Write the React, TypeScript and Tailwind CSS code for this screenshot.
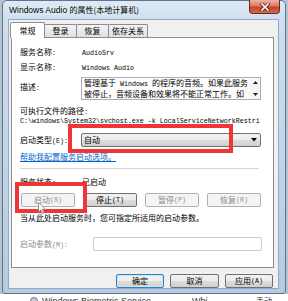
import React from "react";

const CJK = /[\u3000-\u9fff\uff00-\uffef]/;

// SimSun-like metrics: CJK 8px wide, ASCII 4px wide
function T({ s }: { s: string }) {
  const runs: { cjk: boolean; text: string }[] = [];
  for (const ch of s) {
    const c = CJK.test(ch);
    const last = runs[runs.length - 1];
    if (last && last.cjk === c) last.text += ch;
    else runs.push({ cjk: c, text: ch });
  }
  return (
    <>
      {runs.map((r, i) =>
        r.cjk ? (
          <span key={i} className="font-['Noto_Sans_CJK_SC',sans-serif] text-[8px]">
            {r.text}
          </span>
        ) : (
          <span key={i} className="whitespace-pre font-['Liberation_Mono',monospace] text-[6.67px]">
            {r.text}
          </span>
        )
      )}
    </>
  );
}

type BtnProps = { label: string; w: number; disabled?: boolean; primary?: boolean };

function Btn({ label, w, disabled, primary }: BtnProps) {
  const base = "flex h-[14px] items-center justify-center rounded-[2px] border leading-[10px]";
  const look = disabled
    ? "border-[#adb2b5] bg-[#f4f4f4] text-[#8d8d8d]"
    : primary
      ? "border-[#3c7fb1] bg-[linear-gradient(180deg,#f6f6f6_0%,#ececec_50%,#dfdfdf_50%,#d3d3d3_100%)] text-black shadow-[inset_0_0_0_1px_#c6e4f7]"
      : "border-[#707070] bg-[linear-gradient(180deg,#f2f2f2_0%,#ebebeb_50%,#dddddd_50%,#cfcfcf_100%)] text-black";
  return (
    <div className={`${base} ${look}`} style={{ width: w }}>
      <T s={label} />
    </div>
  );
}

function Row({ label, value }: { label: string; value: string }) {
  return (
    <div className="flex h-[10px] items-center leading-[10px]">
      <div className="w-[62px] shrink-0">
        <T s={label} />
      </div>
      <div>
        <T s={value} />
      </div>
    </div>
  );
}

export default function App() {
  return (
    <div className="relative h-[301px] w-[288px] overflow-hidden bg-[#b9c3cd] font-['Noto_Sans_CJK_SC',sans-serif] text-[8px] leading-[10px] text-black">
      {/* window */}
      <div className="ml-[2px] flex h-[294px] w-[284px] flex-col rounded-t-[5px] rounded-b-[3px] border border-[#5f7490] bg-[linear-gradient(180deg,#dfeaf5_0%,#cfdfef_18px,#c0d3e7_60%,#b6cbe2_100%)] px-[5px] pb-[4px]">
        {/* title bar */}
        <div className="flex h-[18px] shrink-0 items-start justify-between">
          <div className="flex h-[17px] items-center pl-[1px] leading-[10px] [text-shadow:0_0_5px_#ffffff]">
            <span className="whitespace-pre font-['Liberation_Sans',sans-serif] text-[8.5px]">Windows Audio </span>
            <span className="font-['Noto_Sans_CJK_SC',sans-serif] text-[8px]">的属性(本地计算机)</span>
          </div>
          <div className="-mt-[1px] flex h-[14px] w-[31px] items-center justify-center rounded-b-[4px] border border-t-0 border-[#6e2a1c] bg-[linear-gradient(180deg,#eab2a4_0%,#dc7a62_45%,#c8432b_55%,#d4694f_100%)]">
            <svg width="10" height="8" viewBox="0 0 10 8">
              <path d="M2 1 L8 7 M8 1 L2 7" stroke="#5a2016" strokeWidth="3.2" strokeLinecap="square" />
              <path d="M2 1 L8 7 M8 1 L2 7" stroke="#ffffff" strokeWidth="1.7" strokeLinecap="square" />
            </svg>
          </div>
        </div>

        {/* client area */}
        <div className="flex h-[270px] w-[271px] flex-col border border-[#98a9be] bg-[#f0f0f0] pt-[2px]">
          {/* tabs */}
          <div className="flex h-[15px] items-end pl-[1px]">
            <div className="relative z-10 -mb-[1px] flex h-[16px] w-[35px] items-center justify-center rounded-t-[2px] border border-b-0 border-[#898c95] bg-white leading-[10px]">
              <T s="常规" />
            </div>
            <div className="-ml-[1px] flex h-[13px] w-[33px] items-center justify-center rounded-t-[2px] border border-b-0 border-[#898c95] bg-[linear-gradient(180deg,#f4f4f4,#e0e0e0)] leading-[10px]">
              <T s="登录" />
            </div>
            <div className="-ml-[1px] flex h-[13px] w-[33px] items-center justify-center rounded-t-[2px] border border-b-0 border-[#898c95] bg-[linear-gradient(180deg,#f4f4f4,#e0e0e0)] leading-[10px]">
              <T s="恢复" />
            </div>
            <div className="-ml-[1px] flex h-[13px] w-[40px] items-center justify-center rounded-t-[2px] border border-b-0 border-[#898c95] bg-[linear-gradient(180deg,#f4f4f4,#e0e0e0)] leading-[10px]">
              <T s="依存关系" />
            </div>
          </div>

          {/* panel */}
          <div className="ml-[2px] flex h-[231px] w-[263px] flex-col border border-[#898c95] bg-white pl-[8px]">
            <div className="mt-[9px]">
              <Row label="服务名称:" value="AudioSrv" />
            </div>
            <div className="mt-[5px]">
              <Row label="显示名称:" value="Windows Audio" />
            </div>

            <div className="mt-[5px] flex">
              <div className="mt-[5px] h-[10px] w-[61px] shrink-0 leading-[10px]">
                <T s="描述:" />
              </div>
              <div className="flex h-[23px] w-[180px] border border-[#abadb3] bg-[#fcfcfc]">
                <div className="flex-1 overflow-hidden pl-[2px] pt-[0px] leading-[9px]">
                  <div className="whitespace-nowrap">
                    <T s="管理基于 Windows 的程序的音频。如果此服务" />
                  </div>
                  <div className="whitespace-nowrap">
                    <T s="被停止，音频设备和效果将不能正常工作。如" />
                  </div>
                </div>
                <div className="flex w-[10px] flex-col items-center justify-between bg-[#f6f6f6] py-[3px]">
                  <svg width="5" height="3" viewBox="0 0 5 3">
                    <path d="M0 3 L2.5 0 L5 3 Z" fill="#222" />
                  </svg>
                  <svg width="5" height="3" viewBox="0 0 5 3">
                    <path d="M0 0 L2.5 3 L5 0 Z" fill="#222" />
                  </svg>
                </div>
              </div>
            </div>

            <div className="mt-[6px] h-[10px] leading-[10px]">
              <T s="可执行文件的路径:" />
            </div>
            <div className="-mt-[1px] h-[10px] overflow-hidden whitespace-nowrap leading-[10px]">
              <T s={"C:\\windows\\System32\\svchost.exe -k LocalServiceNetworkRestri"} />
            </div>

            <div className="mt-[8px] flex h-[14px] items-center">
              <div className="w-[61px] shrink-0 leading-[10px]">
                <T s="启动类型(E):" />
              </div>
              <div className="flex h-[14px] w-[180px] items-center justify-between rounded-[2px] border border-[#707070] bg-[linear-gradient(180deg,#f2f2f2_0%,#ebebeb_50%,#dddddd_50%,#cfcfcf_100%)] pl-[2px] pr-[3px] leading-[10px]">
                <T s="自动" />
                <svg width="6" height="4" viewBox="0 0 6 4">
                  <path d="M0 0 L6 0 L3 3.5 Z" fill="#000" />
                </svg>
              </div>
            </div>

            <div className="mt-[5px] h-[10px] leading-[10px] text-[#0066cc] underline decoration-[#0066cc]">
              <T s="帮助我配置服务启动选项。" />
            </div>

            <div className="mt-[6px] h-px w-[239px] bg-[#d5d5d5]" />

            <div className="mt-[8px]">
              <Row label="服务状态:" value="已启动" />
            </div>

            <div className="ml-[1px] mt-[6px] flex gap-[8px]">
              <Btn label="启动(S)" w={54} disabled />
              <Btn label="停止(T)" w={54} />
              <Btn label="暂停(P)" w={54} disabled />
              <Btn label="恢复(R)" w={54} disabled />
            </div>

            <div className="mt-[6px] h-[10px] whitespace-nowrap leading-[10px]">
              <T s="当从此处启动服务时，您可指定所适用的启动参数。" />
            </div>

            <div className="mt-[14px] flex h-[14px] items-center">
              <div className="w-[73px] shrink-0 leading-[10px] text-[#8d8d8d]">
                <T s="启动参数(M):" />
              </div>
              <div className="h-[14px] w-[169px] rounded-[2px] border border-[#c9cbd0] bg-white" />
            </div>
          </div>

          {/* dialog buttons */}
          <div className="mt-[6px] flex justify-end gap-[6px] pr-[5px]">
            <Btn label="确定" w={48} primary />
            <Btn label="取消" w={49} />
            <Btn label="应用(A)" w={48} />
          </div>
        </div>
      </div>

      {/* window behind, peeking out below */}
      <div className="flex h-[7px] items-start gap-[4px] overflow-hidden bg-white pl-[30px] pt-[2px] font-['Liberation_Sans',sans-serif] text-[9px] leading-[10px] text-[#333]">
        <div className="mt-[1px] h-[8px] w-[8px] rounded-full border border-[#6b7c93] bg-[#c4ccd8]" />
        <span className="w-[146px]">Windows Biometric Service</span>
        <span className="w-[60px]">Wbi</span>
        <span className="font-['Noto_Sans_CJK_SC',sans-serif] text-[8px]">手动</span>
      </div>

      {/* red highlight boxes drawn over the dialog */}
      <div className="absolute left-[68px] top-[124px] h-[29px] w-[165px] border-4 border-[#ef3535]" />
      <div className="absolute left-[15px] top-[182px] h-[31px] w-[72px] border-4 border-[#ef3535]" />

      {/* mouse cursor */}
      <svg className="absolute left-[38px] top-[202px]" width="9" height="13" viewBox="0 0 9 13">
        <path d="M0.5 0.5 L0.5 10 L2.8 7.8 L4.5 11.8 L6 11.1 L4.4 7.3 L7.6 7.3 Z" fill="#ffffff" stroke="#8a8a8a" strokeWidth="0.9" strokeLinejoin="round" />
      </svg>
    </div>
  );
}
